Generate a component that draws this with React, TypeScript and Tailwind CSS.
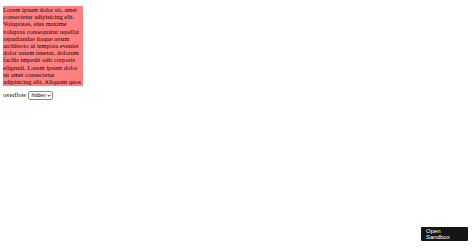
import React from "react";

const text =
  "Lorem ipsum dolor sit, amet consectetur adipisicing elit. Voluptates, eius maxime voluptas consequatur repellat repudiandae itaque rerum architecto ut tempora eveniet dolor autem tenetur, dolorum facilis impedit odit corporis eligendi. Lorem ipsum dolor sit amet consectetur adipisicing elit. Aliquam quos rerum eius consequuntur voluptatem.";

export default function App() {
  return (
    <div className="relative w-[474px] h-[248px] bg-white font-['Liberation_Serif',serif] text-black">
      <div className="pt-[6px] pl-[3px]">
        <div className="w-[80px] h-[80px] overflow-hidden bg-[#ff8080] text-[6.5px] leading-[7.2px] text-[#1a0000]">
          {text}
        </div>
        <div className="mt-[5px] flex items-center gap-[2px] text-[6.5px] leading-none">
          <span>overflow</span>
          <div className="relative h-[9px] w-[25px]">
            <select
              defaultValue="hidden"
              className="appearance-none block h-[9px] w-[25px] border border-[#8a8a8a] rounded-[2px] bg-white text-[4.8px] leading-[7px] pl-[2px] pr-[6px] py-0 font-['Liberation_Sans',sans-serif] text-black"
            >
              <option value="hidden">hidden</option>
              <option value="visible">visible</option>
              <option value="scroll">scroll</option>
              <option value="auto">auto</option>
            </select>
            <svg
              viewBox="0 0 10 6"
              className="pointer-events-none absolute right-[2px] top-[3px] w-[4px] h-[3px]"
            >
              <path d="M1 1l4 4 4-4" fill="none" stroke="black" strokeWidth="2" />
            </svg>
          </div>
        </div>
      </div>
      <button
        type="button"
        className="absolute left-[421px] top-[227px] w-[47px] h-[14px] bg-[#151515] rounded-[1px] text-white text-[6px] leading-[6.2px] text-left pl-[5px] font-['Liberation_Sans',sans-serif]"
      >
        Open
        <br />
        Sandbox
      </button>
    </div>
  );
}
